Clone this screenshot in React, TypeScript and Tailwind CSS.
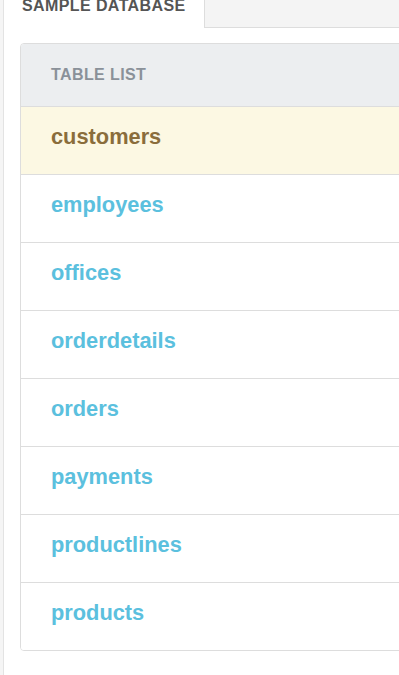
import React from 'react';

const tables = ['customers', 'employees', 'offices', 'orderdetails', 'orders', 'payments', 'productlines', 'products'];

export default function App() {
    const active = 'customers';

    return (
        <div className="flex min-h-[675px] bg-white" style={{ fontFamily: '"Liberation Sans", Arial, sans-serif' }}>
            {/* left gutter */}
            <div className="w-[4px] shrink-0 bg-[#f5f5f5] border-r border-[#e3e3e3]" />

            <div className="flex-1 min-w-0 overflow-hidden">
                {/* Tabs */}
                <div className="flex h-[28px]">
                    <div className="w-[201px] shrink-0 bg-white pl-[18px] border-r border-[#dddddd] overflow-hidden">
                        <span className="block -mt-[5px] text-[16px] leading-[22px] font-bold tracking-[0.4px] text-[#555555]">
                            SAMPLE DATABASE
                        </span>
                    </div>
                    <div className="flex-1 bg-[#f4f4f4] border-b border-[#dddddd]" />
                </div>

                {/* Table list card */}
                <div className="pl-[16px] pt-[15px]">
                    <div className="w-[400px] rounded-[4px] border border-[#dddddd] overflow-hidden">
                        <div className="h-[63px] flex items-center pl-[30px] bg-[#eceef0] border-b border-[#dddddd]">
                            <span className="text-[16px] font-bold tracking-[0.4px] text-[#8a9199]">TABLE LIST</span>
                        </div>
                        {tables.map((t, i) => (
                            <div
                                key={t}
                                className={
                                    'flex items-center pl-[30px] pb-[7px] ' +
                                    (i < tables.length - 1 ? 'h-[68px] border-b border-[#dddddd] ' : 'h-[67px] ') +
                                    (t === active ? 'bg-[#fcf8e3]' : 'bg-white')
                                }
                            >
                                <span
                                    className={
                                        'text-[21.8px] font-bold ' +
                                        (t === active ? 'text-[#8a6d3b]' : 'text-[#5bc0de]')
                                    }
                                >
                                    {t}
                                </span>
                            </div>
                        ))}
                    </div>
                </div>
            </div>
        </div>
    );
}
